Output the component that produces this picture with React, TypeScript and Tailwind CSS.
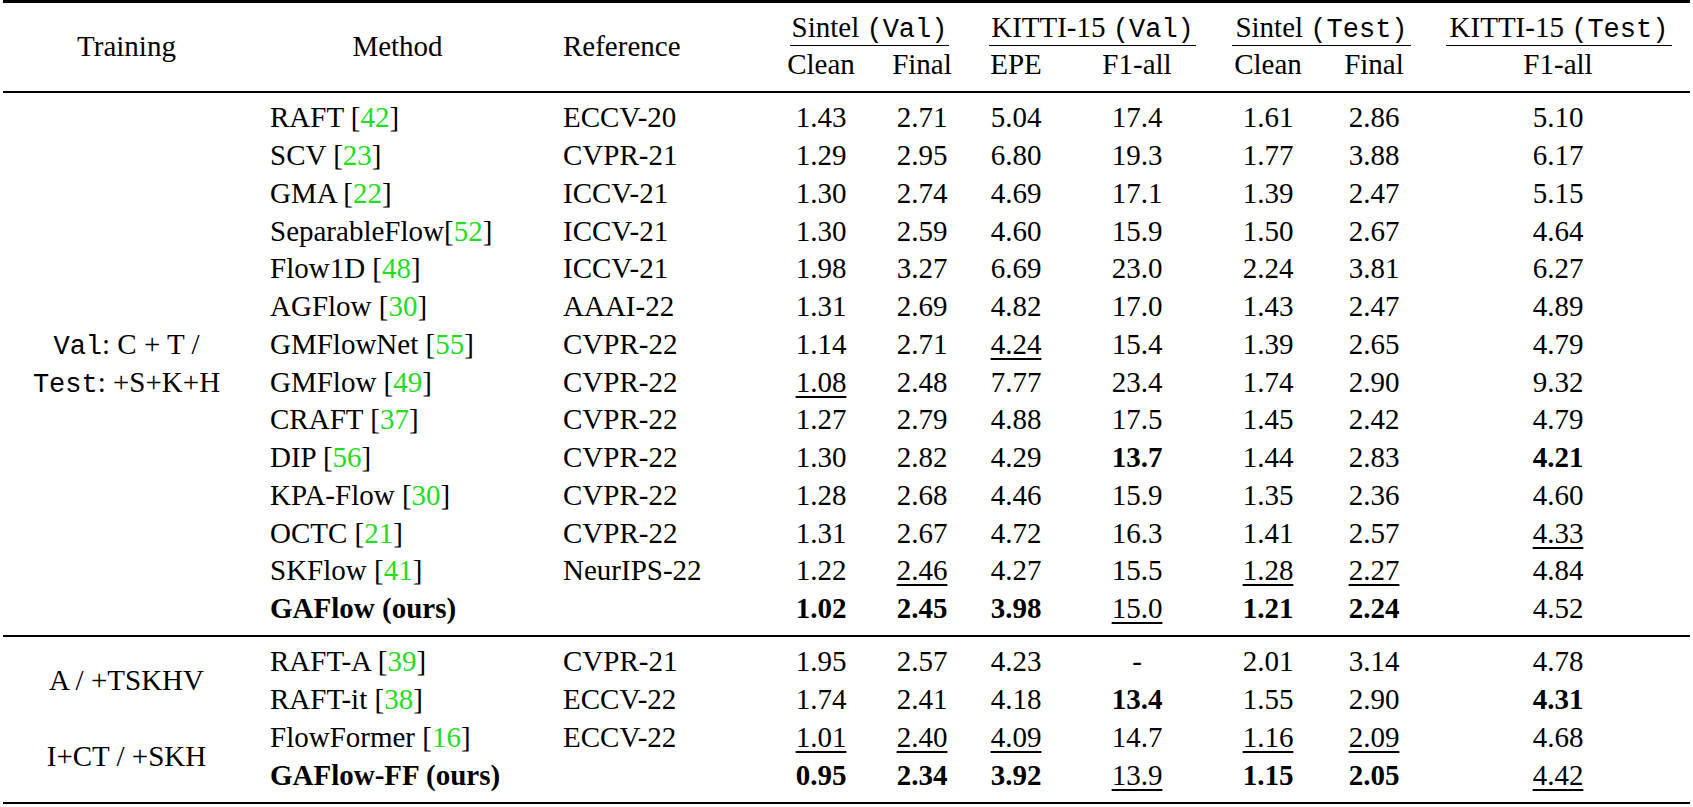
import React from 'react';

const serif = "font-['Liberation_Serif',_'Times_New_Roman',_serif]";
const mono = "font-['Liberation_Mono',_'Courier_New',_monospace] text-[27px]";
const cols = 'grid grid-cols-[247px_295px_225px_102px_100px_88px_154px_108px_104px_264px]';
const row = 'h-[37.75px] leading-[37.75px] whitespace-nowrap';

type Entry = { name: string; cite?: string; ref: string; vals: string[]; ours?: boolean };

// "*" = bold, "_" = underlined
const upper: Entry[] = [
  { name: 'RAFT ', cite: '42', ref: 'ECCV-20', vals: ['1.43', '2.71', '5.04', '17.4', '1.61', '2.86', '5.10'] },
  { name: 'SCV ', cite: '23', ref: 'CVPR-21', vals: ['1.29', '2.95', '6.80', '19.3', '1.77', '3.88', '6.17'] },
  { name: 'GMA ', cite: '22', ref: 'ICCV-21', vals: ['1.30', '2.74', '4.69', '17.1', '1.39', '2.47', '5.15'] },
  { name: 'SeparableFlow', cite: '52', ref: 'ICCV-21', vals: ['1.30', '2.59', '4.60', '15.9', '1.50', '2.67', '4.64'] },
  { name: 'Flow1D ', cite: '48', ref: 'ICCV-21', vals: ['1.98', '3.27', '6.69', '23.0', '2.24', '3.81', '6.27'] },
  { name: 'AGFlow ', cite: '30', ref: 'AAAI-22', vals: ['1.31', '2.69', '4.82', '17.0', '1.43', '2.47', '4.89'] },
  { name: 'GMFlowNet ', cite: '55', ref: 'CVPR-22', vals: ['1.14', '2.71', '_4.24', '15.4', '1.39', '2.65', '4.79'] },
  { name: 'GMFlow ', cite: '49', ref: 'CVPR-22', vals: ['_1.08', '2.48', '7.77', '23.4', '1.74', '2.90', '9.32'] },
  { name: 'CRAFT ', cite: '37', ref: 'CVPR-22', vals: ['1.27', '2.79', '4.88', '17.5', '1.45', '2.42', '4.79'] },
  { name: 'DIP ', cite: '56', ref: 'CVPR-22', vals: ['1.30', '2.82', '4.29', '*13.7', '1.44', '2.83', '*4.21'] },
  { name: 'KPA-Flow ', cite: '30', ref: 'CVPR-22', vals: ['1.28', '2.68', '4.46', '15.9', '1.35', '2.36', '4.60'] },
  { name: 'OCTC ', cite: '21', ref: 'CVPR-22', vals: ['1.31', '2.67', '4.72', '16.3', '1.41', '2.57', '_4.33'] },
  { name: 'SKFlow ', cite: '41', ref: 'NeurIPS-22', vals: ['1.22', '_2.46', '4.27', '15.5', '_1.28', '_2.27', '4.84'] },
  { name: 'GAFlow', ref: '', ours: true, vals: ['*1.02', '*2.45', '*3.98', '_15.0', '*1.21', '*2.24', '4.52'] },
];

const lower: Entry[] = [
  { name: 'RAFT-A ', cite: '39', ref: 'CVPR-21', vals: ['1.95', '2.57', '4.23', '-', '2.01', '3.14', '4.78'] },
  { name: 'RAFT-it ', cite: '38', ref: 'ECCV-22', vals: ['1.74', '2.41', '4.18', '*13.4', '1.55', '2.90', '*4.31'] },
  { name: 'FlowFormer ', cite: '16', ref: 'ECCV-22', vals: ['_1.01', '_2.40', '_4.09', '14.7', '_1.16', '_2.09', '4.68'] },
  { name: 'GAFlow-FF', ref: '', ours: true, vals: ['*0.95', '*2.34', '*3.92', '_13.9', '*1.15', '*2.05', '_4.42'] },
];

function Num({ s }: { s: string }) {
  if (s.startsWith('*')) return <span className="font-bold">{s.slice(1)}</span>;
  if (s.startsWith('_'))
    return <span className="underline decoration-[1.5px] underline-offset-[4px]">{s.slice(1)}</span>;
  return <span>{s}</span>;
}

function Cells({ e }: { e: Entry }) {
  return (
    <>
      <div className={`${row} col-start-2 pl-[20px]`}>
        {e.ours ? (
          <span className="font-bold">{e.name} (ours)</span>
        ) : (
          <>
            {e.name}[<span className="text-[#22dd22]">{e.cite}</span>]
          </>
        )}
      </div>
      <div className={`${row} pl-[18px]`}>{e.ref}</div>
      {e.vals.map((v, i) => (
        <div key={i} className={`${row} text-center`}>
          <Num s={v} />
        </div>
      ))}
    </>
  );
}

function Group({ label, tag, ml, mr, span }: { label: string; tag: string; ml: string; mr: string; span: string }) {
  return (
    <div className={`${span} flex flex-col`}>
      <div className={`h-[36.75px] leading-[36.75px] text-center whitespace-nowrap ${ml} ${mr}`}>
        {label} <span className={mono}>({tag})</span>
      </div>
      <div className={`h-px bg-black ${ml} ${mr}`} />
    </div>
  );
}

export default function App() {
  return (
    <div className={`w-[1693px] h-[807px] bg-white text-black text-[29px] ${serif}`}>
      <div className="ml-[3px] w-[1687px] flex flex-col">
        <div className="h-[2.5px] bg-black" />

        {/* header */}
        <div className={`${cols} mt-[6px]`}>
          <div className="row-span-2 flex items-center justify-center">Training</div>
          <div className="row-span-2 flex items-center justify-center">Method</div>
          <div className="row-span-2 flex items-center pl-[18px]">Reference</div>
          <Group label="Sintel" tag="Val" span="col-span-2" ml="ml-[20px]" mr="mr-[23px]" />
          <Group label="KITTI-15" tag="Val" span="col-span-2" ml="ml-[17px]" mr="mr-[18px]" />
          <Group label="Sintel" tag="Test" span="col-span-2" ml="ml-[18px]" mr="mr-[15px]" />
          <Group label="KITTI-15" tag="Test" span="col-span-1" ml="ml-[20px]" mr="mr-[18px]" />
          {['Clean', 'Final', 'EPE', 'F1-all', 'Clean', 'Final', 'F1-all'].map((h, i) => (
            <div key={i} className={`${row} text-center`}>
              {h}
            </div>
          ))}
        </div>

        <div className="h-[2px] bg-black mt-[7px]" />

        {/* C+T section */}
        <div className={`${cols} mt-[6.4px]`}>
          <div className="col-start-1 row-span-14 flex flex-col items-center justify-center">
            <div className={row}>
              <span className={mono}>Val</span>: C + T /
            </div>
            <div className={row}>
              <span className={mono}>Test</span>: +S+K+H
            </div>
          </div>
          {upper.map((e) => (
            <Cells key={e.name} e={e} />
          ))}
        </div>

        <div className="h-[2px] bg-black mt-[7.4px]" />

        {/* other training schedules */}
        <div className={`${cols} mt-[6px]`}>
          <div className="col-start-1 row-span-2 flex items-center justify-center">A / +TSKHV</div>
          <Cells e={lower[0]} />
          <Cells e={lower[1]} />
          <div className="col-start-1 row-span-2 flex items-center justify-center">I+CT / +SKH</div>
          <Cells e={lower[2]} />
          <Cells e={lower[3]} />
        </div>

        <div className="h-[2.5px] bg-black mt-[7.7px]" />
      </div>
    </div>
  );
}
